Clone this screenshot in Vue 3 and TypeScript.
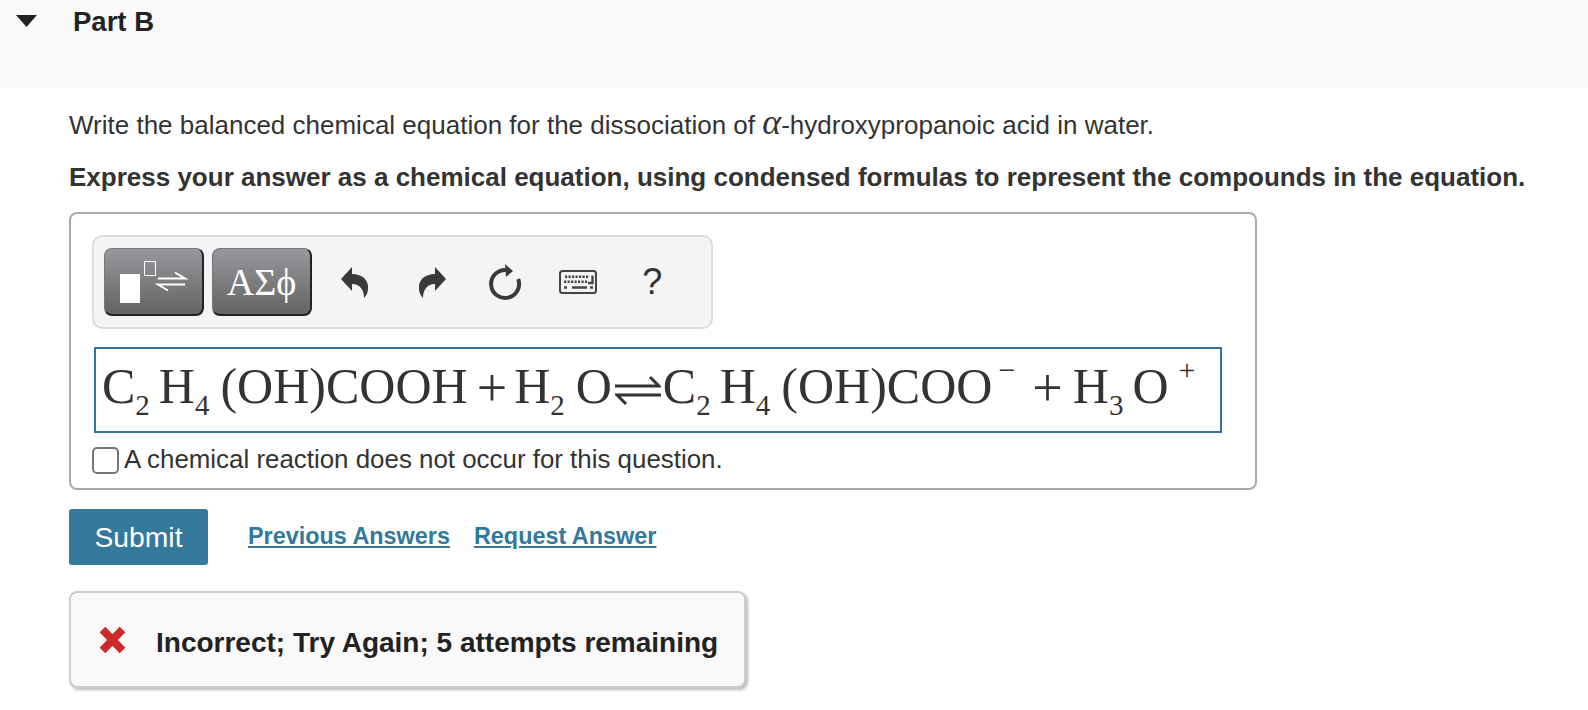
<template>
  <div class="page">
    <header class="part-head">
      <svg class="caret" width="21" height="12" viewBox="0 0 21 12"><path d="M0 0H21L10.500 12Z" fill="#222" /></svg>
      <h2>Part B</h2>
    </header>

    <main class="part-body">
      <p class="prompt">Write the balanced chemical equation for the dissociation of <span class="alpha">α</span>-hydroxypropanoic acid in water.</p>
      <p class="instruction">Express your answer as a chemical equation, using condensed formulas to represent the compounds in the equation.</p>

      <section class="answer-box">
        <div class="toolbar">
          <button class="tpl-btn" aria-label="templates">
            <svg width="72" height="54" viewBox="0 0 72 54">
              <rect x="2" y="19" width="20" height="29" fill="#fff" />
              <rect x="26.500" y="6.500" width="11" height="14" fill="none" stroke="#fff" />
              <path d="M40 23.500H67L57 17.500M67 29.500H40L50 35.500" fill="none" stroke="#fff" stroke-width="2" />
            </svg>
          </button>
          <button class="tpl-btn greek">ΑΣϕ</button>
          <span class="tool first">
            <svg width="27" height="31" viewBox="0 0 27 31"><path d="M0 12L11 0V7C22 7 28 14 27 22C27 26 25 29 23 31C23 23 19 17 11 17V24Z" fill="#3a3a3a" /></svg>
          </span>
          <span class="tool redo">
            <svg width="27" height="31" viewBox="0 0 27 31"><path d="M27 12L16 0V7C5 7 -1 14 0 22C0 26 2 29 4 31C4 23 8 17 16 17V24Z" fill="#3a3a3a" /></svg>
          </span>
          <span class="tool refresh">
            <svg width="34" height="38" viewBox="0 0 34 38">
              <path d="M18 7A14 14 0 1 0 30.200 16" fill="none" stroke="#3a3a3a" stroke-width="4" />
              <path d="M17 1L25 8L18 14Z" fill="#3a3a3a" />
            </svg>
          </span>
          <span class="tool keyboard">
            <svg width="38" height="24" viewBox="0 0 38 24">
              <rect x="1" y="1" width="36" height="22" rx="2.500" fill="#f4f4f4" stroke="#444" stroke-width="2" />
              <path d="M6 6.700H30M5 11.700H28" fill="none" stroke="#444" stroke-width="2.500" stroke-dasharray="2.200 1.300" />
              <path d="M5 17.500H8M13 17.500H28M31 17.500H34M33.500 5.500V13H29" fill="none" stroke="#444" stroke-width="2.300" />
            </svg>
          </span>
          <span class="tool help">?</span>
        </div>

        <div class="equation">
          <span>C</span><sub>2</sub><span class="sp">H</span><sub>4</sub><span class="sp paren">(OH)COOH</span><span class="op">+</span><span>H</span><sub>2</sub><span class="sp oxygen">O</span>
          <svg class="eq-arrow" width="46" height="32" viewBox="0 0 46 32">
            <path d="M0 12H44L35 3M46 21H2L11 30" fill="none" stroke="#333" stroke-width="3" />
          </svg>
          <span>C</span><sub>2</sub><span class="sp">H</span><sub>4</sub><span class="sp paren">(OH)COO</span><sup class="minus">−</sup><span class="op wide">+</span><span>H</span><sub>3</sub><span class="sp">O</span><sup class="plus">+</sup>
        </div>

        <label class="no-reaction">
          <span class="check"></span>
          <span class="no-reaction-text">A chemical reaction does not occur for this question.</span>
        </label>
      </section>

      <div class="actions">
        <button class="submit">Submit</button>
        <a class="link first-link" href="#">Previous Answers</a>
        <a class="link" href="#">Request Answer</a>
      </div>

      <div class="feedback">
        <svg width="29" height="28" viewBox="0 0 29 28">
          <path d="M4.500 3.500L24.500 24.500M24.500 3.500L4.500 24.500" fill="none" stroke="#cb2a2a" stroke-width="8" />
        </svg>
        <strong>Incorrect; Try Again; 5 attempts remaining</strong>
      </div>
    </main>
  </div>
</template>

<script setup lang="ts">
</script>

<style>
html, body { background: #fff; }
</style>

<style scoped>
.page {
  width: 1588px;
  height: 710px;
  overflow: hidden;
  font-family: "Liberation Sans", Arial, sans-serif;
  color: #333;
}
.part-head {
  height: 88px;
  background: #f9f9f9;
  display: flex;
  align-items: flex-start;
}
.caret { margin: 15px 0 0 16px; }
.part-head h2 {
  margin: 6px 0 0 36px;
  font-size: 27.500px;
  line-height: 32px;
  font-weight: 700;
  color: #222;
}
.part-body { padding: 0 0 0 69px; }
.prompt {
  margin: 22px 0 0;
  font-size: 26px;
  line-height: 30px;
}
.alpha {
  font-family: "Liberation Serif", serif;
  font-style: italic;
  font-size: 36px;
  line-height: 0;
}
.instruction {
  margin: 22px 0 0;
  font-size: 26px;
  line-height: 30px;
  font-weight: 700;
  white-space: nowrap;
}
.answer-box {
  box-sizing: border-box;
  width: 1188px;
  height: 278px;
  margin-top: 20px;
  padding: 21px;
  border: 2px solid #aaa;
  border-radius: 8px;
}
.toolbar {
  box-sizing: border-box;
  width: 621px;
  height: 94px;
  display: flex;
  align-items: center;
  gap: 8px;
  padding: 0 10px;
  background: #f4f4f4;
  border: 2px solid #ddd;
  border-radius: 10px;
}
.tpl-btn {
  width: 100px;
  height: 68px;
  padding: 0;
  display: flex;
  align-items: center;
  justify-content: center;
  color: #fff;
  background: linear-gradient(#98979d, #636363);
  border: 1px solid #777;
  border-right: 2px solid #222;
  border-bottom: 2px solid #222;
  border-radius: 8px;
}
.greek {
  font-family: "Liberation Serif", serif;
  font-size: 38px;
}
.tool {
  width: 74.500px;
  margin-left: -8px;
  display: flex;
  justify-content: center;
  align-items: center;
  flex: none;
}
.tool.first { margin-left: -3px; }
.tool.redo { margin-left: -4px; }
.tool.refresh { margin-left: -10px; }
.tool.keyboard { margin-left: -10px; }
.help { font-size: 36px; line-height: 40px; color: #333; }
.equation {
  box-sizing: border-box;
  width: 1128px;
  height: 86px;
  margin: 18px 0 0 2px;
  padding-left: 6px;
  display: flex;
  align-items: baseline;
  border: 2px solid #33749a;
  font-family: "Liberation Serif", serif;
  font-size: 50px;
  line-height: 72px;
  white-space: nowrap;
}
.equation sub {
  font-size: 29px;
  line-height: 1;
  vertical-align: baseline;
  transform: translateY(12px);
}
.equation .sp { margin-left: 9px; }
.equation .sp.paren { margin-left: 11px; }
.equation .sp.oxygen { margin-left: 11px; }
.equation .op {
  margin: 0 7px 0 9px;
  font-size: 54px;
  transform: translateY(3px);
}
.equation .op.wide { margin: 0 10px 0 17px; }
.eq-arrow { align-self: center; margin: 0 2px 0 3px; }
.equation sup {
  font-size: 30px;
  line-height: 1;
  transform: translateY(-23px);
}
.equation sup.minus { margin-left: 6px; }
.equation sup.plus { margin-left: 10px; }
.no-reaction {
  display: flex;
  align-items: flex-start;
  gap: 5px;
  margin: 14px 0 0 0;
  font-size: 25.900px;
  line-height: 28px;
}
.no-reaction-text { margin-top: -2px; }
.check {
  box-sizing: border-box;
  width: 27px;
  height: 27px;
  background: #fff;
  border: 2px solid #767676;
  border-radius: 5px;
}
.actions {
  display: flex;
  align-items: flex-start;
  margin-top: 19px;
}
.submit {
  width: 139px;
  height: 56px;
  padding: 0;
  background: #34789c;
  border: none;
  border-radius: 3px;
  color: #fff;
  font-family: inherit;
  font-size: 28.300px;
}
.link {
  margin: 12px 0 0 24px;
  color: #34789c;
  font-size: 23.400px;
  line-height: 30px;
  font-weight: 700;
}
.first-link { margin-left: 40px; }
.feedback {
  box-sizing: border-box;
  width: 677px;
  height: 97px;
  margin-top: 26px;
  padding-left: 27px;
  display: flex;
  align-items: center;
  gap: 29px;
  background: #f9f9f9;
  border: 2px solid #ccc;
  border-radius: 8px;
  box-shadow: 2px 2px 3px #bbb;
}
.feedback strong {
  padding-top: 7px;
  font-size: 28px;
  color: #222;
  white-space: nowrap;
}
</style>
